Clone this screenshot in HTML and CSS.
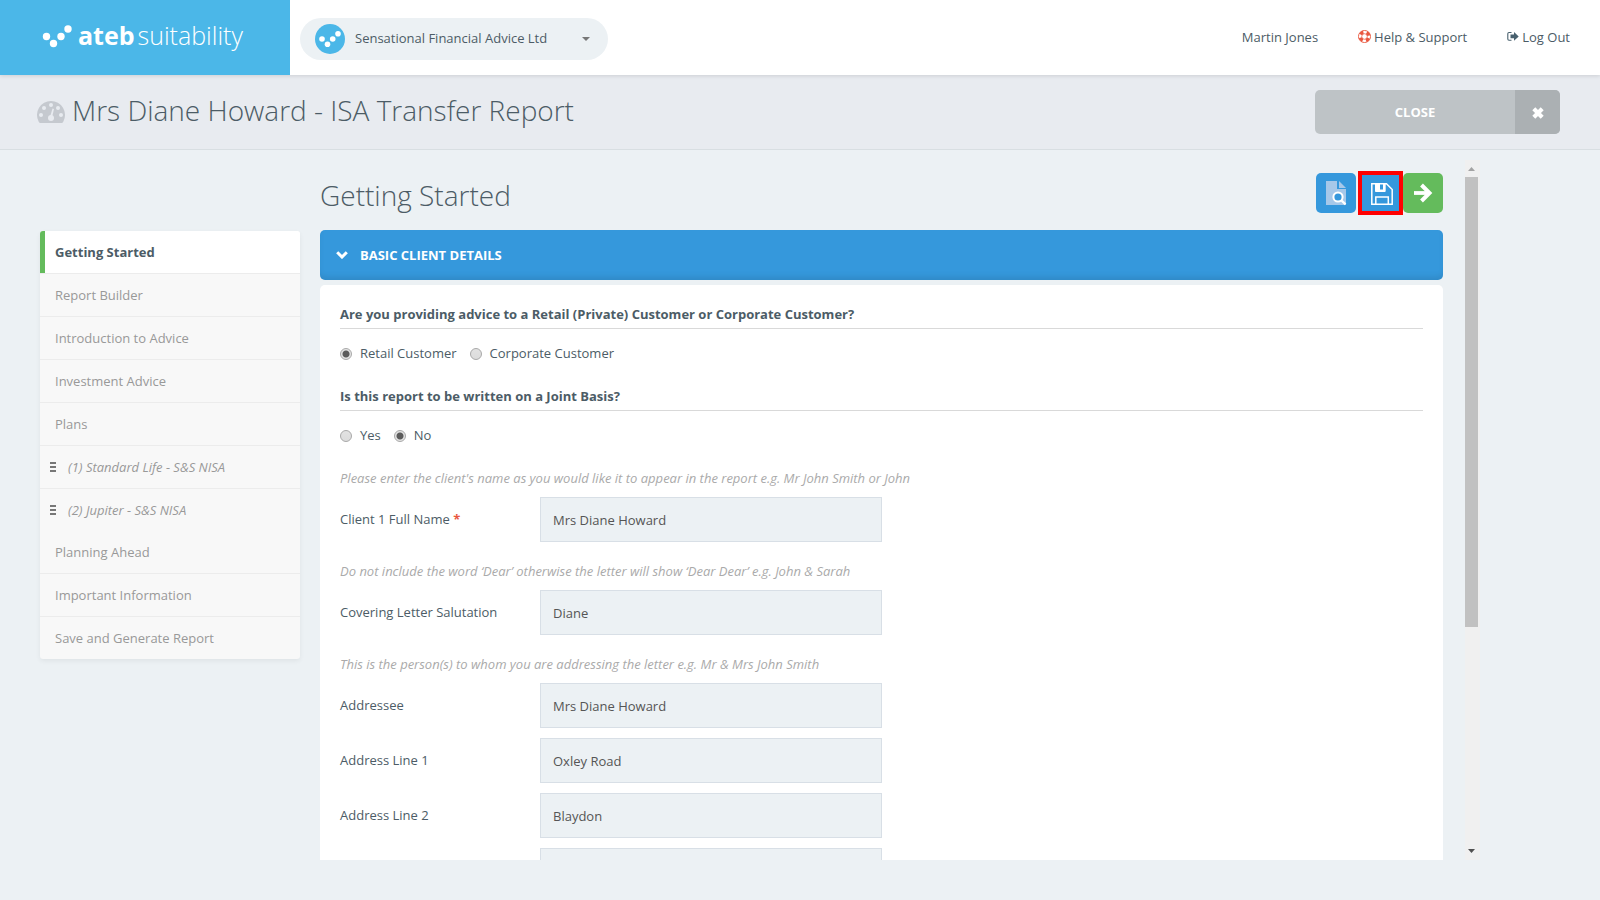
FILE: index.html
```html
<!DOCTYPE html>
<html lang="en">
<head>
<meta charset="utf-8">
<title>Mrs Diane Howard - ISA Transfer Report</title>
<link rel="stylesheet" href="styles.css">
</head>
<body>
<header class="topbar">
  <a class="brand" href="#">
    <svg class="brand-dots" width="30" height="24" viewBox="0 0 30 24" fill="#fff" aria-hidden="true"><circle cx="4.5" cy="12.5" r="3.7"/><circle cx="11.5" cy="19.5" r="3.7"/><circle cx="19" cy="12.5" r="3.7"/><circle cx="26" cy="5" r="3.7"/></svg>
    <span class="brand-name"><b>ateb</b><span>suitability</span></span>
  </a>
  <button class="company" type="button">
    <svg width="30" height="30" viewBox="0 0 30 30" aria-hidden="true"><circle cx="15" cy="15" r="15" fill="#4bb7e8"/><g fill="#fff"><circle cx="7" cy="15" r="2.8"/><circle cx="12.5" cy="20.3" r="2.8"/><circle cx="17.7" cy="15" r="2.8"/><circle cx="23" cy="9.7" r="2.8"/></g></svg>
    <span class="company-name">Sensational Financial Advice Ltd</span>
    <svg width="8" height="4" viewBox="0 0 8 4" aria-hidden="true"><path d="M0 0h8L4 4z" fill="#777"/></svg>
  </button>
  <nav class="account">
    <a href="#">Martin Jones</a>
    <a href="#"><svg width="13" height="13" viewBox="0 0 14 14" aria-hidden="true"><circle cx="7" cy="7" r="4.7" fill="none" stroke="#e9573f" stroke-width="3.4" stroke-dasharray="3.7 3.683" stroke-dashoffset="-1.85"/><circle cx="7" cy="7" r="6.5" fill="none" stroke="#e9573f"/><circle cx="7" cy="7" r="3" fill="none" stroke="#e9573f" stroke-width=".8"/></svg>Help &amp; Support</a>
    <a href="#"><svg width="12" height="11" viewBox="0 0 12 11" aria-hidden="true"><path d="M4.5 1.5H2A1.2 1.2 0 0 0 .8 2.700V8A1.200 1.200 0 0 0 2 9.200h2.500" fill="none" stroke="#48606e" stroke-width="1.100"/><path d="M3.500 3.500H7V1l4.700 4.400L7 9.800V7.200H3.500z" fill="#48606e"/></svg>Log Out</a>
  </nav>
</header>
<section class="titlebar">
  <svg width="28" height="22" viewBox="0 0 28 22" aria-hidden="true"><path d="M14 0A14 14 0 0 0 1.600 20.500Q2.300 22 3.500 22h21q1.200 0 1.900-1.500A14 14 0 0 0 14 0z" fill="#c5c9cf"/><g fill="#e8ebf0"><circle cx="14" cy="4" r="2"/><circle cx="7" cy="7" r="2"/><circle cx="21" cy="7" r="2"/><circle cx="4" cy="14" r="2"/><circle cx="24" cy="14" r="2"/><circle cx="14" cy="17" r="3"/><path d="M13 16l2.500-8.500 1.500.5-2 8.500z"/></g></svg>
  <h1>Mrs Diane Howard - ISA Transfer Report</h1>
  <button class="close" type="button">
    <span class="close-label">CLOSE</span>
    <span class="close-icon"><svg width="12" height="12" viewBox="0 0 12 12" aria-hidden="true"><path d="M1.800 1.800l8.400 8.400M10.200 1.800L1.800 10.200" stroke="#fff" stroke-width="4.200"/></svg></span>
  </button>
</section>
<main class="workspace">
  <nav class="steps">
    <ul>
      <li class="current"><a href="#">Getting Started</a></li>
      <li><a href="#">Report Builder</a></li>
      <li><a href="#">Introduction to Advice</a></li>
      <li><a href="#">Investment Advice</a></li>
      <li><a href="#">Plans</a></li>
      <li class="plan"><a href="#"><i class="grip"></i>(1) Standard Life - S&amp;S NISA</a></li>
      <li class="plan last-plan"><a href="#"><i class="grip"></i>(2) Jupiter - S&amp;S NISA</a></li>
      <li><a href="#">Planning Ahead</a></li>
      <li><a href="#">Important Information</a></li>
      <li><a href="#">Save and Generate Report</a></li>
    </ul>
  </nav>
  <form class="content">
    <div class="content-head">
      <h2>Getting Started</h2>
      <div class="tools">
        <button class="tool" type="button" aria-label="Preview"><svg width="22" height="26" viewBox="0 0 22 26" aria-hidden="true"><path d="M1 1h11v8h9v16H1z" fill="#a6c8e9"/><path d="M14 1l7 7h-7z" fill="#a6c8e9"/><circle cx="13" cy="17" r="4.600" fill="#3598dc" stroke="#fff" stroke-width="2"/><path d="M16.500 20.500l4 3.800" stroke="#fff" stroke-width="2.400"/></svg></button>
        <button class="tool save" type="button" aria-label="Save"><svg width="22" height="22" viewBox="0 0 22 22" fill="none" stroke="#fff" aria-hidden="true"><path d="M.8.800h14.700L21.200 6.500v14.700H.8z" stroke-width="1.500"/><path d="M4.500 1v7.500h9.700V1" stroke-width="1"/><path d="M4.500 1H9v5.500h3V1h2v7.500H4.500z" fill="#fff" stroke="none"/><path d="M4.800 21v-7h12.500v7" stroke-width="1.500"/></svg></button>
        <button class="tool next" type="button" aria-label="Next"><svg width="20" height="20" viewBox="0 0 20 20" fill="none" stroke="#fff" stroke-width="4" aria-hidden="true"><path d="M1 10h15" stroke-width="3.800"/><path d="M8.500 2l8 8-8 8"/></svg></button>
      </div>
    </div>
    <button class="panel-head" type="button"><svg width="12" height="8" viewBox="0 0 12 8" aria-hidden="true"><path d="M1.200 1.200L6 6l4.800-4.800" fill="none" stroke="#fff" stroke-width="3"/></svg>BASIC CLIENT DETAILS</button>
    <div class="panel">
      <fieldset>
        <legend>Are you providing advice to a Retail (Private) Customer or Corporate Customer?</legend>
        <div class="choices">
          <label><input type="radio" name="customer" checked>Retail Customer</label>
          <label><input type="radio" name="customer">Corporate Customer</label>
        </div>
      </fieldset>
      <fieldset>
        <legend>Is this report to be written on a Joint Basis?</legend>
        <div class="choices">
          <label><input type="radio" name="joint">Yes</label>
          <label><input type="radio" name="joint" checked>No</label>
        </div>
      </fieldset>
      <p class="hint">Please enter the client's name as you would like it to appear in the report e.g. Mr John Smith or John</p>
      <div class="field"><label for="client">Client 1 Full Name <b class="required">*</b></label><input id="client" type="text" value="Mrs Diane Howard"></div>
      <p class="hint">Do not include the word ‘Dear’ otherwise the letter will show ‘Dear Dear’ e.g. John &amp; Sarah</p>
      <div class="field"><label for="salutation">Covering Letter Salutation</label><input id="salutation" type="text" value="Diane"></div>
      <p class="hint">This is the person(s) to whom you are addressing the letter e.g. Mr &amp; Mrs John Smith</p>
      <div class="field"><label for="addressee">Addressee</label><input id="addressee" type="text" value="Mrs Diane Howard"></div>
      <div class="field"><label for="line1">Address Line 1</label><input id="line1" type="text" value="Oxley Road"></div>
      <div class="field"><label for="line2">Address Line 2</label><input id="line2" type="text" value="Blaydon"></div>
      <div class="field"><span></span><input type="text" aria-label="Address Line 3"></div>
    </div>
  </form>
  <div class="scrollbar" aria-hidden="true">
    <svg width="13" height="17" viewBox="0 0 13 17"><path d="M3 11h7L6.500 7z" fill="#a3a3a3"/></svg>
    <div class="track"><div class="thumb"></div></div>
    <svg width="13" height="17" viewBox="0 0 13 17"><path d="M3 6h7L6.500 10z" fill="#505050"/></svg>
  </div>
</main>
</body>
</html>
```
FILE: styles.css
```css
* { box-sizing: border-box; }
body {
  margin: 0;
  height: 100vh;
  display: flex;
  flex-direction: column;
  overflow: hidden;
  background: #ecf1f4;
  color: #4c5c66;
  font: 13px/20px "Open Sans", "Noto Sans", sans-serif;
}
button, input { font: inherit; color: inherit; }
button { border: 0; padding: 0; cursor: pointer; }
a { color: inherit; text-decoration: none; }
svg { display: block; flex: none; }
h1, h2, p, ul, fieldset { margin: 0; padding: 0; }
h1, h2 { font-size: 28px; line-height: 40px; font-weight: 300; }

.topbar {
  flex: none;
  height: 75px;
  display: flex;
  background: #fff;
  box-shadow: 0 1px 4px rgba(0, 0, 0, .12);
  z-index: 1;
}
.brand {
  width: 290px;
  padding: 0 0 4px 42px;
  display: flex;
  align-items: center;
  gap: 6px;
  background: #4bb7e8;
  color: #fff;
}
.brand-name { display: flex; gap: 3px; padding-bottom: 2px; font: 25px/32px "Open Sans", sans-serif; }
.brand-name b { font-weight: 700; }
.brand-name span { font-weight: 300; }
.company {
  align-self: flex-start;
  width: 308px;
  height: 42px;
  margin: 18px 0 0 10px;
  padding: 0 18px 0 15px;
  display: flex;
  align-items: center;
  gap: 10px;
  border-radius: 21px;
  background: #ecf1f4;
  text-align: left;
}
.company-name { flex: 1; padding-bottom: 2px; }
.account {
  margin-left: auto;
  padding: 0 30px 2px 0;
  display: flex;
  align-items: center;
  gap: 40px;
}
.account a { display: flex; align-items: center; gap: 3px; }

.titlebar {
  flex: none;
  height: 75px;
  padding: 0 40px 0 37px;
  display: flex;
  align-items: center;
  gap: 7px;
  background: #e8ebf0;
  border-bottom: 1px solid #d8dee2;
}
.titlebar h1 { padding-bottom: 4px; }
.close {
  width: 245px;
  height: 44px;
  margin-left: auto;
  display: flex;
  border-radius: 5px;
  overflow: hidden;
  background: #bec3c6;
  color: #fff;
  font-weight: 700;
}
.close-label, .close-icon { display: flex; align-items: center; justify-content: center; height: 100%; }
.close-label { flex: 1; }
.close-icon { width: 45px; padding-top: 1px; background: #abb0b3; }

.workspace {
  flex: 1;
  min-height: 0;
  padding: 10px 120px 40px 40px;
  display: flex;
}
.steps { flex: none; width: 260px; margin-right: 20px; padding-top: 71px; }
.steps ul {
  list-style: none;
  border-radius: 3px;
  overflow: hidden;
  background: #f8f8f8;
  box-shadow: 0 2px 5px rgba(0, 0, 0, .06);
  color: #999;
}
.steps li { border-bottom: 1px solid #ececec; }
.steps li.last-plan, .steps li:last-child { border-bottom: 0; }
.steps a { display: flex; align-items: center; height: 42px; padding-left: 15px; }
.steps .current a {
  padding-left: 10px;
  border-left: 5px solid #64bb5c;
  background: #fff;
  color: #4c5c66;
  font-weight: 700;
}
.steps .plan a { padding-left: 10px; gap: 12px; font-style: italic; }
.grip { width: 6px; height: 10px; background: repeating-linear-gradient(#777 0 2px, transparent 2px 4px); }

.content { flex: 1; min-width: 0; overflow: hidden; }
.content-head { height: 70px; padding-top: 13px; display: flex; align-items: flex-start; justify-content: space-between; }
.content-head h2 { padding-top: 2px; }
.tools { display: flex; align-items: flex-start; }
.tool {
  width: 40px;
  height: 40px;
  display: flex;
  align-items: center;
  justify-content: center;
  border-radius: 5px;
  background: #3598dc;
}
.save { width: 37px; height: 36px; margin: 2px 4px 0 6px; padding: 2px 0 0 3px; border-radius: 0; outline: 4px solid #f00; }
.next { background: #64bb5c; }
.panel-head {
  width: 100%;
  height: 50px;
  padding-left: 16px;
  display: flex;
  align-items: center;
  gap: 12px;
  border-radius: 5px;
  background: #3598dc;
  box-shadow: inset 0 -5px 6px -2px rgba(0, 0, 0, .1);
  color: #fff;
  font-weight: 700;
}
.panel { margin-top: 5px; padding: 19px 20px; border-radius: 5px; background: #fff; }
fieldset { border: 0; min-width: 0; margin-bottom: 23px; }
legend { width: 100%; padding: 0 0 4px; border-bottom: 1px solid #d9d9d9; font-weight: 700; }
.choices { display: flex; gap: 13px; padding-top: 14px; }
.choices label { display: flex; align-items: center; gap: 8px; }
.choices input {
  appearance: none;
  width: 12px;
  height: 12px;
  margin: 1px 0 0;
  border: 1px solid #a8a8a8;
  border-radius: 50%;
  background: linear-gradient(#e2e2e2, #dcdcdc);
}
.choices input:checked { background: radial-gradient(circle, #5c5c5c 0 3px, #e4e4e4 4px); }
.hint { margin-bottom: 9px; color: #aaa; font-style: italic; }
.field { display: flex; margin-bottom: 10px; }
.field > :first-child { flex: none; width: 200px; padding-top: 12px; }
.field input {
  width: 342px;
  height: 45px;
  padding: 0 12px;
  border: 1px solid #d8dfe6;
  border-radius: 0;
  background: #ecf1f4;
  color: #555;
}
.field + .hint { margin-top: 19px; }
.required { color: #e9573f; }

.scrollbar {
  flex: none;
  width: 15px;
  margin-left: 22px;
  display: flex;
  flex-direction: column;
  background: #f0f0f0;
}
.track { flex: 1; }
.thumb { width: 13px; height: 67.5%; background: #c1c1c1; }
```
